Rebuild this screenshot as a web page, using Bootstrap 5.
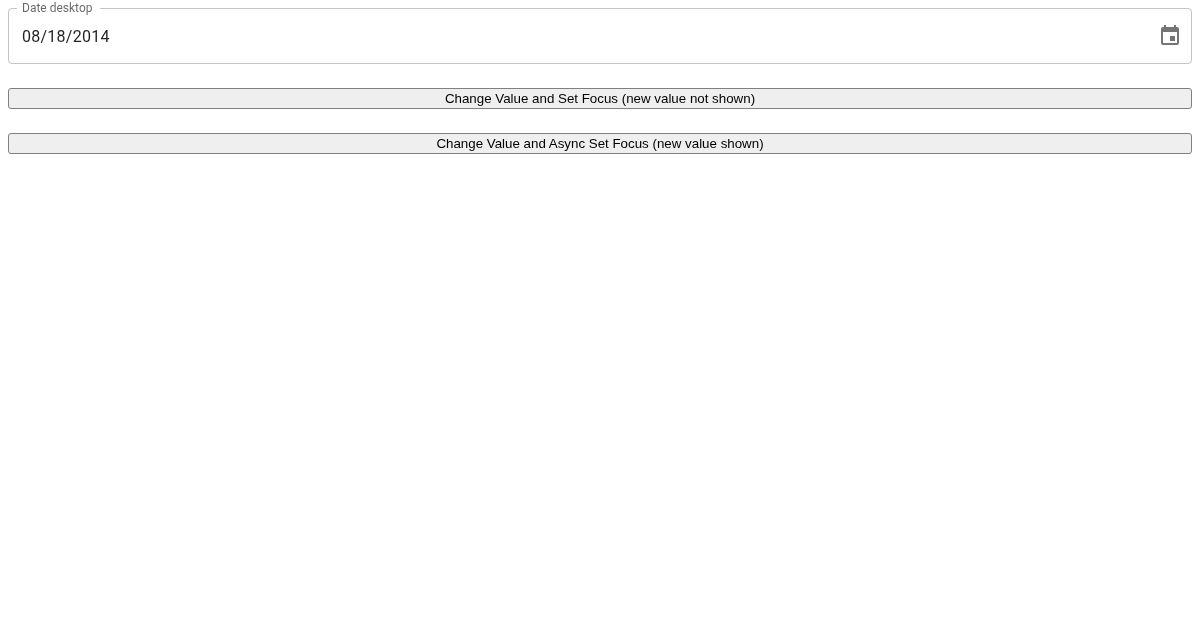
<!DOCTYPE html>
<html lang="en">
<head>
<meta charset="utf-8">
<title>Date desktop</title>
<link href="https://cdn.jsdelivr.net/npm/bootstrap@5.3.0/dist/css/bootstrap.min.css" rel="stylesheet">
<style>
html { background: #fff; }
body { padding: 8px; background: transparent; font-family: Roboto, sans-serif; will-change: transform; }
.date-field { height: 56px; padding: 0 9px 0 13px; border: 1px solid rgba(0,0,0,.23); border-radius: 4px; margin-bottom: 24px; }
.date-label { top: -9px; left: 8px; padding: 0 5px; background: #fff; color: rgba(0,0,0,.6); font-size: 12px; line-height: 16px; width: 83px; white-space: nowrap; }
.date-value { font-size: 16px; line-height: 24px; letter-spacing: .25px; color: rgba(0,0,0,.87); margin-top: 2px; }
.date-icon { width: 24px; height: 24px; fill: rgba(0,0,0,.54); }
.native-btn { display: block; width: 100%; height: 21px; padding: 1px 6px; margin-bottom: 24px; font-family: "Liberation Sans", Arial, sans-serif; font-size: 13.3333px; line-height: normal; color: #000; background: #efefef; border: 1px solid #808080; border-radius: 3px; }
</style>
</head>
<body>
<div class="date-field position-relative d-flex align-items-center justify-content-between">
  <span class="date-label position-absolute">Date desktop</span>
  <span class="date-value">08/18/2014</span>
  <svg class="date-icon" viewBox="0 0 24 24" aria-hidden="true"><path d="M17 12h-5v5h5v-5zM16 1v2H8V1H6v2H5c-1.11 0-1.99.9-1.99 2L3 19c0 1.1.89 2 2 2h14c1.1 0 2-.9 2-2V5c0-1.1-.9-2-2-2h-1V1h-2zm3 18H5V8h14v11z"/></svg>
</div>
<button type="button" class="native-btn">Change Value and Set Focus (new value not shown)</button>
<button type="button" class="native-btn">Change Value and Async Set Focus (new value shown)</button>
<script src="https://cdn.jsdelivr.net/npm/bootstrap@5.3.0/dist/js/bootstrap.bundle.min.js"></script>
</body>
</html>
